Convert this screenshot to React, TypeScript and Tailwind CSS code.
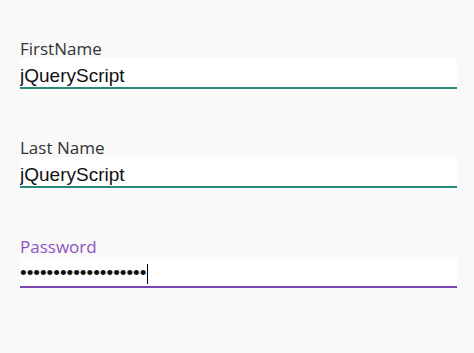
import React from "react";

export default function App() {
  return (
    <div className="w-[474px] h-[353px] bg-[#f9f9f9] px-[20px] pt-[39px] font-['Open_Sans',sans-serif]">
      <div className="flex flex-col w-[437px]">
        <div className="flex flex-col">
          <label className="text-[17px] leading-[19px] text-[#333]">FirstName</label>
          <input
            defaultValue="jQueryScript"
            className="h-[31px] pt-[6px] bg-white border-b-2 border-[#2a8779] outline-none text-[19px] text-[#111] font-['Liberation_Sans',Arial,sans-serif] px-0"
          />
        </div>
        <div className="flex flex-col mt-[49px]">
          <label className="text-[17px] leading-[19px] text-[#333]">Last Name</label>
          <input
            defaultValue="jQueryScript"
            className="h-[31px] pt-[6px] bg-white border-b-2 border-[#2a8779] outline-none text-[19px] text-[#111] font-['Liberation_Sans',Arial,sans-serif] px-0"
          />
        </div>
        <div className="flex flex-col mt-[49px]">
          <label className="text-[17px] leading-[20px] text-[#8e52c0]">Password</label>
          <div className="h-[31px] pt-[4px] bg-white border-b-2 border-[#7b44b0] flex items-center font-['Liberation_Sans',Arial,sans-serif] text-[19px] text-[#111]">
            <span>{"•".repeat(19)}</span>
            <span className="inline-block w-[1px] h-[20px] bg-black ml-[1px]" />
          </div>
        </div>
      </div>
    </div>
  );
}
